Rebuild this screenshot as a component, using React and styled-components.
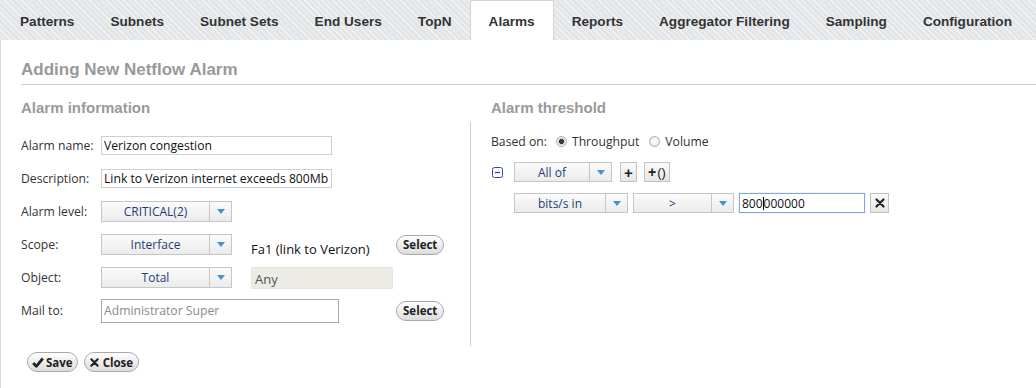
import React from 'react';
import styled, { createGlobalStyle, css } from 'styled-components';

const GlobalStyle = createGlobalStyle`
  html, body { margin: 0; padding: 0; background: #fff; }
  body {
    font-family: "Open Sans", "Liberation Sans", sans-serif;
    font-size: 12.2px;
    color: #333;
  }
`;

const Page = styled.div`
  display: flex;
  flex-direction: column;
  min-height: 100vh;
  overflow: hidden;
`;

const TabBar = styled.nav`
  display: flex;
  height: 40px;
  padding-left: 2px;
  background: repeating-linear-gradient(45deg, #e3e6e9 0 3px, #f2f3f5 3px 4px);
`;

const Tab = styled.a`
  flex-shrink: 0;
  white-space: nowrap;
  display: flex;
  align-items: center;
  padding: 2px 17px 0;
  border: 1px solid transparent;
  border-bottom: 0;
  font: bold 13.6px "Liberation Sans", Arial, sans-serif;
  color: #333;
  text-decoration: none;
  ${p => p.$active && css`
    background: #fff;
    border-color: #d4d4d4;
    padding: 2px 18px 0;
  `}
`;

const Panel = styled.main`
  flex: 1;
  border-left: 1px solid #d9d9d9;
  padding-left: 20px;
`;

const Title = styled.h1`
  margin: 20px 0 0;
  padding-bottom: 4px;
  line-height: 20px;
  border-bottom: 1px solid #cccccc;
  font: bold 17px "Liberation Sans", Arial, sans-serif;
  color: #999;
`;

const Columns = styled.div`
  display: grid;
  grid-template-columns: 449px 1fr;
  grid-template-rows: auto auto;
`;

const SectionHeading = styled.h2`
  margin: 14px 0 0;
  line-height: 18px;
  font: bold 15px "Liberation Sans", Arial, sans-serif;
  color: #999;
  padding-left: ${p => p.$indent || 0}px;
`;

const LeftBody = styled.div`
  padding: 13px 0 19px;
`;

const FormRow = styled.div`
  display: grid;
  grid-template-columns: 80px 150px 145px auto;
  align-items: center;
  height: 33px;
`;

const Label = styled.label`
  color: #333;
`;

const TextField = styled.input`
  box-sizing: border-box;
  width: ${p => p.$w}px;
  height: ${p => p.$h || 19}px;
  padding: 0 2px;
  border: 1px solid ${p => p.$dark ? '#a9a9a9' : '#cfcfcf'};
  font: 12.2px "Open Sans", sans-serif;
  color: #111;
  outline: none;
  grid-column: ${p => p.$span || 'auto'};
  &::placeholder { color: #8a8a8a; }
`;

const Dropdown = styled.div`
  display: inline-flex;
  box-sizing: border-box;
  width: ${p => p.$w}px;
  height: ${p => p.$h || 21}px;
  border: 1px solid #c6c6c6;
  background: linear-gradient(#fbfbfb, #ebebeb);
  color: #1f3d73;
  font-size: 12px;
`;

const DropLabel = styled.span`
  flex: 1;
  display: flex;
  align-items: center;
  justify-content: center;
`;

const DropArrow = styled.span`
  width: 21px;
  border-left: 1px solid #c6c6c6;
  display: flex;
  align-items: center;
  justify-content: center;
  &::after {
    content: '';
    border-left: 4px solid transparent;
    border-right: 4px solid transparent;
    border-top: 5px solid #4b8fd0;
  }
`;

const LinkText = styled.span`
  margin-top: 8px;
  font-size: 13px;
  color: #111;
`;

const ReadOnlyBox = styled.div`
  box-sizing: border-box;
  width: 142px;
  height: 22px;
  padding: 2px 3px 0;
  background: #ecebe5;
  border: 1px solid #e6e5df;
  color: #555;
  font-size: 13px;
  display: flex;
  align-items: center;
`;

const PillButton = styled.button`
  display: inline-flex;
  align-items: center;
  justify-content: center;
  gap: ${p => p.$gap ?? 2}px;
  height: 20px;
  padding: 0 ${p => p.$pad ?? 6}px;
  border-radius: 10px;
  border: 1px solid #a9a9a9;
  background: linear-gradient(#ffffff, #dcdcdc);
  font: bold 11.5px "Open Sans", sans-serif;
  color: #222;
  justify-self: start;
  cursor: pointer;
`;

const Actions = styled.div`
  display: flex;
  gap: 6px;
  padding-left: 6px;
  margin-top: 6px;
`;

const RightBody = styled.div`
  margin-top: 6px;
  border-left: 1px solid #cccccc;
  padding: 9px 0 0 20px;
`;

const BasedRow = styled.div`
  display: flex;
  align-items: center;
  height: 20px;
`;

const Radio = styled.span`
  display: inline-block;
  box-sizing: border-box;
  width: 11px;
  height: 11px;
  border-radius: 50%;
  border: 1px solid #adadad;
  margin: 0 5px 0 ${p => p.$gap}px;
  background: ${p => p.$checked
    ? 'radial-gradient(circle, #3a3a3a 0 2.3px, #cfcfcf 2.8px, #f4f4f4 4.5px)'
    : 'radial-gradient(circle, #f8f8f8 0 2px, #e2e2e2 5px)'};
`;

const CondRow = styled.div`
  display: flex;
  align-items: center;
  height: 20px;
  margin-top: 11px;
  gap: ${p => p.$gap ?? 6}px;
  padding-left: ${p => p.$indent ?? 0}px;
`;

const SquareButton = styled.button`
  box-sizing: border-box;
  height: 20px;
  width: ${p => p.$w}px;
  padding: 0;
  border: 1px solid #c2c2c2;
  background: linear-gradient(#fafafa, #e6e6e6);
  font: bold ${p => p.$fs || 15}px "Liberation Sans", Arial, sans-serif;
  color: #222;
  display: inline-flex;
  align-items: center;
  justify-content: center;
  margin-left: ${p => p.$ml || 0}px;
`;

const FocusField = styled.div`
  box-sizing: border-box;
  width: 126px;
  height: 20px;
  padding: 0 2px;
  border: 1px solid #7ea9e1;
  box-shadow: 0 0 1px #9cc0ee;
  display: flex;
  align-items: center;
  font-size: 12px;
  color: #111;
`;

const Caret = styled.span`
  display: inline-block;
  width: 1px;
  height: 13px;
  background: #000;
`;

const Paren = styled.span`
  font-weight: normal;
  font-size: 13px;
  margin-left: 1px;
`;

const MinusIcon = () => (
  <svg width="11" height="11" viewBox="0 0 11 11" style={{ marginLeft: 1, marginRight: 11 }}>
    <rect x="0.5" y="0.5" width="10" height="10" rx="2" fill="#fff" stroke="#3546a0" />
    <line x1="3" y1="5.5" x2="8" y2="5.5" stroke="#3546a0" strokeWidth="1.3" />
  </svg>
);

const CheckIcon = () => (
  <svg width="12" height="11" viewBox="0 0 12 11">
    <path d="M1.2 6 L4.3 9.3 L10.8 1.5" fill="none" stroke="#222" strokeWidth="2.8" strokeLinejoin="round" />
  </svg>
);

const CrossIcon = ({ size = 10, w = 2.4 }) => (
  <svg width={size} height={size} viewBox="0 0 10 10">
    <path d="M1.5 1.5 L8.5 8.5 M8.5 1.5 L1.5 8.5" stroke="#222" strokeWidth={w} strokeLinecap="round" />
  </svg>
);

const Select = ({ w, h, children }) => (
  <Dropdown $w={w} $h={h}>
    <DropLabel>{children}</DropLabel>
    <DropArrow />
  </Dropdown>
);

const tabs = ['Patterns', 'Subnets', 'Subnet Sets', 'End Users', 'TopN', 'Alarms', 'Reports', 'Aggregator Filtering', 'Sampling', 'Configuration'];

export default function App() {
  return (
    <Page>
      <GlobalStyle />
      <TabBar>
        {tabs.map(t => (
          <Tab key={t} href="#" $active={t === 'Alarms'}>{t}</Tab>
        ))}
      </TabBar>
      <Panel>
        <Title>Adding New Netflow Alarm</Title>
        <Columns>
          <SectionHeading>Alarm information</SectionHeading>
          <SectionHeading $indent={21}>Alarm threshold</SectionHeading>
          <LeftBody>
            <FormRow>
              <Label>Alarm name:</Label>
              <TextField $w={231} $span="2 / 4" readOnly value="Verizon congestion" />
            </FormRow>
            <FormRow>
              <Label>Description:</Label>
              <TextField $w={231} $span="2 / 4" readOnly value="Link to Verizon internet exceeds 800Mb" />
            </FormRow>
            <FormRow>
              <Label>Alarm level:</Label>
              <Select w={131}>CRITICAL(2)</Select>
            </FormRow>
            <FormRow>
              <Label>Scope:</Label>
              <Select w={131}>Interface</Select>
              <LinkText>Fa1 (link to Verizon)</LinkText>
              <PillButton>Select</PillButton>
            </FormRow>
            <FormRow>
              <Label>Object:</Label>
              <Select w={131}>Total</Select>
              <ReadOnlyBox>Any</ReadOnlyBox>
            </FormRow>
            <FormRow>
              <Label>Mail to:</Label>
              <TextField $w={238} $h={24} $dark $span="2 / 4" readOnly placeholder="Administrator Super" />
              <PillButton>Select</PillButton>
            </FormRow>
          </LeftBody>
          <RightBody>
            <BasedRow>
              Based on:
              <Radio $checked $gap={9} />Throughput
              <Radio $gap={10} />Volume
            </BasedRow>
            <CondRow $gap={0}>
              <MinusIcon />
              <Select w={98} h={20}>All of</Select>
              <SquareButton $w={17} $ml={8}>+</SquareButton>
              <SquareButton $w={26} $ml={7} $fs={14}>+<Paren>()</Paren></SquareButton>
            </CondRow>
            <CondRow $indent={23} $gap={5}>
              <Select w={114} h={20}>bits/s in</Select>
              <Select w={101} h={20}>&gt;</Select>
              <FocusField>800<Caret />000000</FocusField>
              <SquareButton $w={19}><CrossIcon size={10} w={2.2} /></SquareButton>
            </CondRow>
          </RightBody>
        </Columns>
        <Actions>
          <PillButton $pad={4}><CheckIcon />Save</PillButton>
          <PillButton $pad={5} $gap={4}><CrossIcon size={9} w={2.4} />Close</PillButton>
        </Actions>
      </Panel>
    </Page>
  );
}
